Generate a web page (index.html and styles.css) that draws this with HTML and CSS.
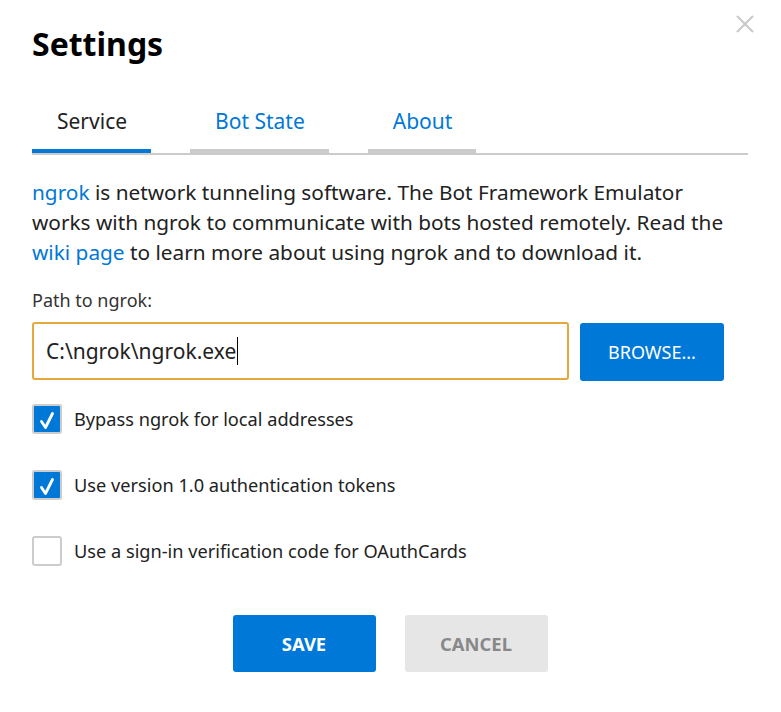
FILE: index.html
```html
<!DOCTYPE html>
<html>
<head>
<meta charset="utf-8">
<link rel="stylesheet" href="styles.css">
</head>
<body>
<div class="dialog">
  <button class="close" aria-label="Close">
    <svg width="20" height="20" viewBox="0 0 20 20"><path d="M2 2 L18 18 M18 2 L2 18" stroke="#c8c8c8" stroke-width="2" fill="none"/></svg>
  </button>
  <h1 class="title">Settings</h1>
  <div class="tabs">
    <div class="tab active">Service</div>
    <div class="tab">Bot State</div>
    <div class="tab">About</div>
  </div>
  <p class="intro"><a class="link">ngrok</a> is network tunneling software. The Bot Framework Emulator<br>works with ngrok to communicate with bots hosted remotely. Read the<br><a class="link">wiki page</a> to learn more about using ngrok and to download it.</p>
  <div class="label">Path to ngrok:</div>
  <div class="path-row">
    <div class="input"><span class="input-text">C:\ngrok\ngrok.exe</span><span class="caret"></span></div>
    <button class="btn primary browse">BROWSE...</button>
  </div>
  <div class="checks">
    <div class="check-row">
      <span class="box checked"><svg width="26" height="26" viewBox="0 0 26 26"><path d="M7.5 15.5 L11.5 21.5 L18.5 7.5" stroke="#fff" stroke-width="2.8" fill="none" stroke-linecap="round" stroke-linejoin="round"/></svg></span>
      <span class="check-label">Bypass ngrok for local addresses</span>
    </div>
    <div class="check-row">
      <span class="box checked"><svg width="26" height="26" viewBox="0 0 26 26"><path d="M7.5 15.5 L11.5 21.5 L18.5 7.5" stroke="#fff" stroke-width="2.8" fill="none" stroke-linecap="round" stroke-linejoin="round"/></svg></span>
      <span class="check-label">Use version 1.0 authentication tokens</span>
    </div>
    <div class="check-row">
      <span class="box"></span>
      <span class="check-label">Use a sign-in verification code for OAuthCards</span>
    </div>
  </div>
  <div class="actions">
    <button class="btn primary save">SAVE</button>
    <button class="btn secondary">CANCEL</button>
  </div>
</div>
</body>
</html>
```

FILE: styles.css
```css
* { box-sizing: border-box; }
html, body { margin: 0; padding: 0; background: #fff; }
body {
  font-family: "Noto Sans", "Open Sans", sans-serif;
  color: #222;
  width: 781px;
  height: 712px;
  overflow: hidden;
}
.dialog {
  position: relative;
  padding: 21px 33px 0 32px;
}
.close {
  position: absolute;
  top: 14px;
  right: 26px;
  background: none;
  border: 0;
  padding: 0;
  width: 20px;
  height: 20px;
}
.close svg { display: block; }
.title {
  margin: 0;
  font-size: 32px;
  font-weight: 700;
  color: #000;
  line-height: 46px;
}
.tabs {
  display: flex;
  gap: 39px;
  margin-top: 40px;
  border-bottom: 2px solid #cbcbcb;
}
.tab {
  font-size: 21px;
  line-height: 28px;
  padding: 0 24px 14px 25px;
  color: #0078d7;
  border-bottom: 4px solid #cbcbcb;
}
.tab.active {
  color: #222;
  border-bottom-color: #0078d7;
}
.intro {
  margin: 22px 0 0 0;
  font-size: 20.8px;
  line-height: 30px;
  white-space: nowrap;
}
.link { color: #0078d7; text-decoration: none; }
.label {
  margin-top: 22px;
  font-size: 18px;
  line-height: 22px;
  color: #333;
}
.path-row {
  display: flex;
  align-items: center;
  margin-top: 10px;
  gap: 11px;
}
.input {
  width: 537px;
  height: 58px;
  border: 2px solid #e5a83c;
  border-radius: 3px;
  display: flex;
  align-items: center;
  padding-left: 12px;
  font-size: 21px;
  color: #222;
}
.caret {
  display: inline-block;
  width: 1px;
  height: 28px;
  background: #000;
  margin-left: 1px;
}
.btn {
  font-family: inherit;
  border: 0;
  border-radius: 3px;
  height: 58px;
  width: 144px;
  padding: 0;
  font-size: 18px;
}
.primary { background: #0078d7; color: #fff; }
.browse { margin-top: 2px; }
.save, .secondary { font-weight: 700; font-size: 18.4px; }
.secondary { background: #e6e6e6; color: #888; }
.checks {
  margin-top: 23px;
  display: flex;
  flex-direction: column;
  gap: 36px;
}
.check-row {
  display: flex;
  align-items: center;
  height: 30px;
}
.box {
  width: 30px;
  height: 30px;
  border: 2px solid #cccccc;
  border-radius: 3px;
  background: #fff;
  display: flex;
  align-items: center;
  justify-content: center;
  flex-shrink: 0;
}
.box.checked { background: #0078d7; }
.box svg { display: block; }
.check-label {
  margin-left: 12px;
  font-size: 18.2px;
  color: #222;
}
.actions {
  display: flex;
  justify-content: center;
  gap: 29px;
  margin-top: 49px;
  padding-left: 0;
}
.actions .btn { width: 143px; height: 57px; }
```
